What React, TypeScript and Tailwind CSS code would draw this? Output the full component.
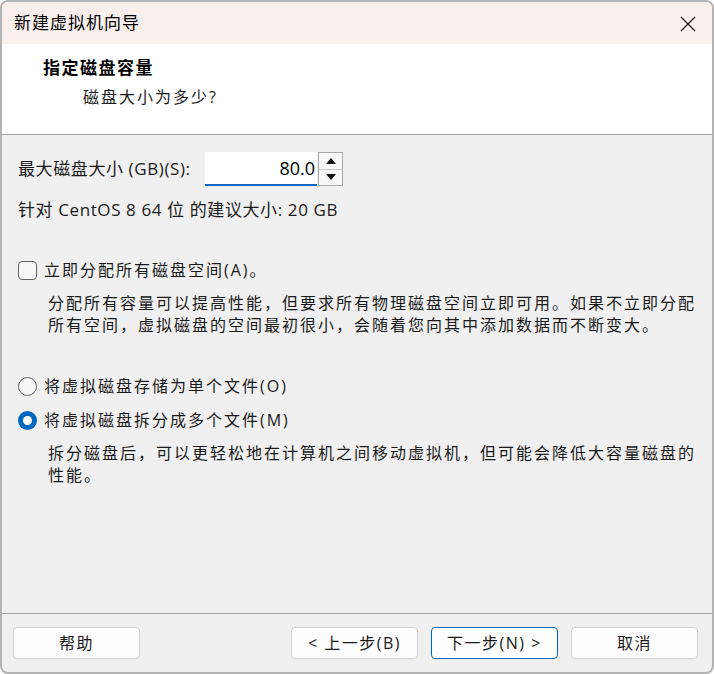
import React from "react";

const font = "font-['Open_Sans','Noto_Sans_CJK_SC',sans-serif]";
const wide = "text-[16px] tracking-[2px] leading-[22px] h-[22px] whitespace-nowrap text-[#1a1a1a]";

function Checkbox() {
  return <span className="w-[19px] h-[19px] rounded-[4px] border border-[#5f5f5f] bg-[#f6f6f6] shrink-0" />;
}

function Radio({ checked }: { checked?: boolean }) {
  if (checked) {
    return (
      <span className="w-[19px] h-[19px] rounded-full bg-[#0067c0] flex items-center justify-center shrink-0">
        <span className="w-[9px] h-[9px] rounded-full bg-white" />
      </span>
    );
  }
  return <span className="w-[19px] h-[19px] rounded-full border border-[#5f5f5f] bg-[#f6f6f6] shrink-0" />;
}

function Button({ children, primary }: { children: React.ReactNode; primary?: boolean }) {
  return (
    <button
      type="button"
      className={
        "w-[127px] h-[32px] rounded-[4px] bg-[#fdfdfd] text-[16px] tracking-[1.5px] text-[#1a1a1a] flex items-center justify-center " +
        (primary ? "border border-[#0067c0]" : "border border-[#d0d0d0]")
      }
    >
      {children}
    </button>
  );
}

export default function App() {
  return (
    <div className={"w-[714px] h-[674px] rounded-t-[8px] rounded-b-[8px] border-2 border-[#b3b3b3] overflow-hidden flex flex-col bg-[#f0f0f0] " + font}>
      {/* title bar */}
      <div className="h-[42px] bg-[#f9efed] flex items-center justify-between pl-[12px] pr-[16px] shrink-0">
        <span className="text-[17px] tracking-[1px] text-black">新建虚拟机向导</span>
        <svg width="16" height="16" viewBox="0 0 16 16" className="mt-[1px]">
          <path d="M1 1 L15 15 M15 1 L1 15" stroke="#1a1a1a" strokeWidth="1.2" />
        </svg>
      </div>

      {/* header */}
      <div className="h-[91px] bg-white border-b border-[#a0a0a0] shrink-0 flex flex-col">
        <div className="mt-[13px] pl-[41px] text-[17px] tracking-[1.5px] leading-[22px] font-bold text-black">指定磁盘容量</div>
        <div className="mt-[7px] pl-[81px] text-[16px] tracking-[2px] leading-[22px] text-[#1a1a1a]">磁盘大小为多少?</div>
      </div>

      {/* body */}
      <div className="flex-1 flex flex-col pl-[16px]">
        <div className="mt-[17px] h-[34px] flex items-center">
          <span className="text-[17px] tracking-[0.6px] text-[#1a1a1a] w-[187px] whitespace-nowrap">最大磁盘大小 (GB)(S):</span>
          <div className="w-[112px] h-[34px] bg-white border-b-2 border-[#0067c0] flex items-center justify-end pr-[2px] text-[18px] text-black">
            80.0
          </div>
          <div className="ml-[1px] w-[25px] h-[34px] flex flex-col border border-[#a8a8a8] bg-[#f0f0f0]">
            <div className="flex-1 flex items-center justify-center border-b border-[#c8c8c8] bg-[#f8f8f8]">
              <svg width="10" height="6" viewBox="0 0 10 6"><path d="M0 6 L5 0 L10 6 Z" fill="#111" /></svg>
            </div>
            <div className="flex-1 flex items-center justify-center bg-[#f8f8f8]">
              <svg width="10" height="6" viewBox="0 0 10 6"><path d="M0 0 L5 6 L10 0 Z" fill="#111" /></svg>
            </div>
          </div>
        </div>

        <div className="mt-[13px] h-[22px] leading-[22px] text-[17px] tracking-[0.6px] text-[#1a1a1a] whitespace-nowrap">
          针对 CentOS 8 64 位 的建议大小: 20 GB
        </div>

        <div className="mt-[38px] h-[22px] flex items-center">
          <Checkbox />
          <span className={"ml-[7px] " + wide}>立即分配所有磁盘空间(A)。</span>
        </div>
        <div className="mt-[11px] pl-[30px] flex flex-col">
          <span className={wide}>分配所有容量可以提高性能，但要求所有物理磁盘空间立即可用。如果不立即分配</span>
          <span className={wide}>所有空间，虚拟磁盘的空间最初很小，会随着您向其中添加数据而不断变大。</span>
        </div>

        <div className="mt-[39px] h-[22px] flex items-center">
          <Radio />
          <span className={"ml-[7px] " + wide}>将虚拟磁盘存储为单个文件(O)</span>
        </div>
        <div className="mt-[12px] h-[22px] flex items-center">
          <Radio checked />
          <span className={"ml-[7px] " + wide}>将虚拟磁盘拆分成多个文件(M)</span>
        </div>
        <div className="mt-[11px] pl-[30px] flex flex-col">
          <span className={wide}>拆分磁盘后，可以更轻松地在计算机之间移动虚拟机，但可能会降低大容量磁盘的</span>
          <span className={wide}>性能。</span>
        </div>
      </div>

      {/* footer */}
      <div className="h-[59px] border-t border-[#a0a0a0] shrink-0 flex items-start pt-[13px] pl-[11px] pr-[14px]">
        <Button>帮助</Button>
        <div className="flex-1" />
        <div className="flex gap-[13px]">
          <Button>&lt; 上一步(B)</Button>
          <Button primary>下一步(N) &gt;</Button>
          <Button>取消</Button>
        </div>
      </div>
    </div>
  );
}
